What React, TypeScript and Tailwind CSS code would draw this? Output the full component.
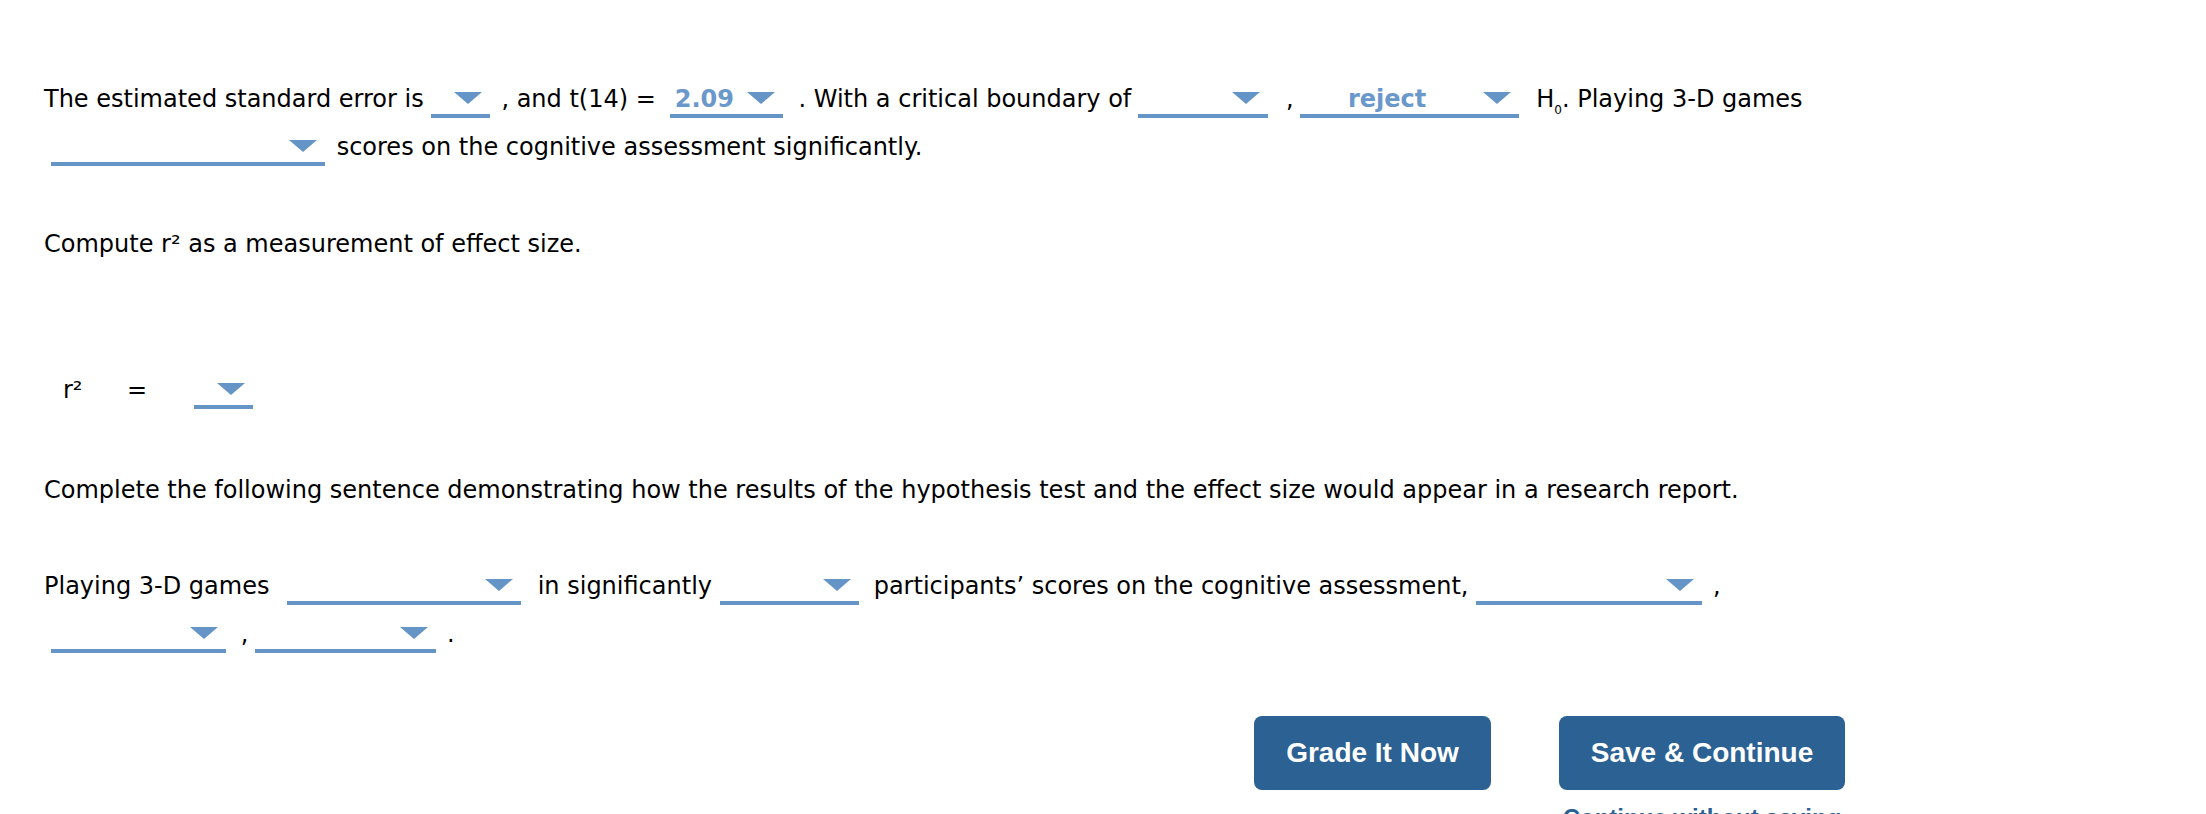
import React from "react";

function Arrow() {
  return (
    <svg
      className="absolute right-[8px] bottom-[10px]"
      width="28"
      height="12"
      viewBox="0 0 28 12"
    >
      <polygon points="0,0 28,0 14,12" fill="#6594c6" />
    </svg>
  );
}

function DD({ cls, value }: { cls: string; value?: string }) {
  return (
    <span
      className={`relative inline-block align-baseline leading-[30px] border-b-4 border-[#6594c6] ${cls}`}
    >
      {value ? (
        <span className="block pr-[44px] text-center font-bold text-[#6a98ca]">{value}</span>
      ) : (
        <span className="block">&nbsp;</span>
      )}
      <Arrow />
    </span>
  );
}

export default function App() {
  return (
    <div
      className="w-[2206px] h-[814px] overflow-hidden bg-white text-black text-[24px] pl-[44px] pt-[75px]"
      style={{ fontFamily: '"DejaVu Sans", Verdana, sans-serif' }}
    >
      {/* Paragraph 1 */}
      <div className="leading-[48px] whitespace-nowrap">
        <div>
          The estimated standard error is
          <DD cls="ml-[7px] mr-[4px] w-[59px]" />
          {" "}, and t(14) =
          <DD cls="ml-[14px] mr-[8px] w-[113px]" value="2.09" />
          {" "}. With a critical boundary of
          <DD cls="ml-[7px] mr-[10px] w-[130px]" />
          {" "},
          <DD cls="ml-[6px] mr-[10px] w-[219px]" value="reject" />
          {" "}H<span className="text-[12px] align-[-7px] leading-none">0</span>. Playing 3-D games
        </div>
        <div>
          <DD cls="ml-[7px] mr-[4px] w-[274px]" />
          {" "}scores on the cognitive assessment significantly.
        </div>
      </div>

      {/* Compute r2 */}
      <div className="mt-[49px] leading-[48px]">Compute r² as a measurement of effect size.</div>

      <div className="mt-[98px] flex items-baseline leading-[48px]">
        <span className="ml-[19px] w-[64px]">r²</span>
        <span className="w-[67px]">=</span>
        <DD cls="w-[59px]" />
      </div>

      <div className="mt-[52px] leading-[48px] whitespace-nowrap">
        Complete the following sentence demonstrating how the results of the hypothesis test and the effect size would appear in a research report.
      </div>

      <div className="mt-[48px] leading-[48px] whitespace-nowrap">
        <div>
          Playing 3-D games{" "}
          <DD cls="ml-[10px] mr-[9px] w-[234px]" />
          {" "}in significantly
          <DD cls="ml-[8px] mr-[7px] w-[139px]" />
          {" "}participants’ scores on the cognitive assessment,
          <DD cls="ml-[8px] mr-[3px] w-[226px]" />
          {" "},
        </div>
        <div>
          <DD cls="ml-[7px] mr-[7px] w-[175px]" />
          {" "},
          <DD cls="ml-[7px] mr-[3px] w-[181px]" />
          {" "}.
        </div>
      </div>

      <div
        className="mt-[58px] flex justify-end gap-[68px] pr-[361px]"
        style={{ fontFamily: '"Liberation Sans", Arial, Helvetica, sans-serif' }}
      >
        <button className="w-[237px] h-[74px] rounded-[8px] bg-[#2b6193] text-white font-bold text-[28px]">
          Grade It Now
        </button>
        <div className="flex flex-col items-center">
          <button className="w-[286px] h-[74px] rounded-[8px] bg-[#2b6193] text-white font-bold text-[28px]">
            Save &amp; Continue
          </button>
          <span className="mt-[16px] leading-none text-[24px] font-bold text-[#2b6193] whitespace-nowrap">
            Continue without saving
          </span>
        </div>
      </div>
    </div>
  );
}
